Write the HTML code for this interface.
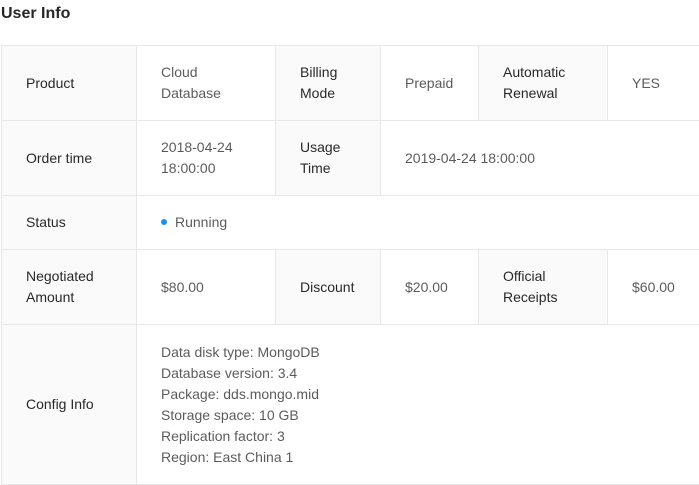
<!DOCTYPE html>
<html><head><style>
body{margin:0;background:#fff;font-family:"Liberation Sans",sans-serif;font-size:14px;width:699px;height:483px;overflow:hidden;position:relative}
.t{position:absolute;left:1px;top:3px;font-size:16px;font-weight:bold;color:rgba(0,0,0,.85);line-height:21px}
table{position:absolute;left:1px;top:45px;border-collapse:collapse;table-layout:fixed;width:720px;border-top:1px solid #e8e8e8;border-left:1px solid #e8e8e8}
td{border:1px solid #e8e8e8;padding:0 0 0 24px;line-height:21px;vertical-align:middle;color:rgba(0,0,0,.65)}
td.l{background:#fafafa;color:rgba(0,0,0,.85)}
.dot{display:inline-block;width:6px;height:6px;border-radius:50%;background:#1890ff;margin-right:8px;vertical-align:middle;position:relative;top:-1px}
</style></head><body>
<div class="t">User Info</div>
<table>
<colgroup><col style="width:135px"><col style="width:139px"><col style="width:105px"><col style="width:98px"><col style="width:129px"><col style="width:114px"></colgroup>
<tr style="height:75px"><td class="l">Product</td><td>Cloud<br>Database</td><td class="l">Billing<br>Mode</td><td>Prepaid</td><td class="l">Automatic<br>Renewal</td><td>YES</td></tr>
<tr style="height:75px"><td class="l">Order time</td><td>2018-04-24<br>18:00:00</td><td class="l">Usage<br>Time</td><td colspan="3">2019-04-24 18:00:00</td></tr>
<tr style="height:54px"><td class="l">Status</td><td colspan="5"><span class="dot"></span>Running</td></tr>
<tr style="height:75px"><td class="l">Negotiated<br>Amount</td><td>$80.00</td><td class="l">Discount</td><td>$20.00</td><td class="l">Official<br>Receipts</td><td>$60.00</td></tr>
<tr style="height:160px"><td class="l">Config Info</td><td colspan="5">Data disk type: MongoDB<br>Database version: 3.4<br>Package: dds.mongo.mid<br>Storage space: 10 GB<br>Replication factor: 3<br>Region: East China 1</td></tr>
</table>
</body></html>
